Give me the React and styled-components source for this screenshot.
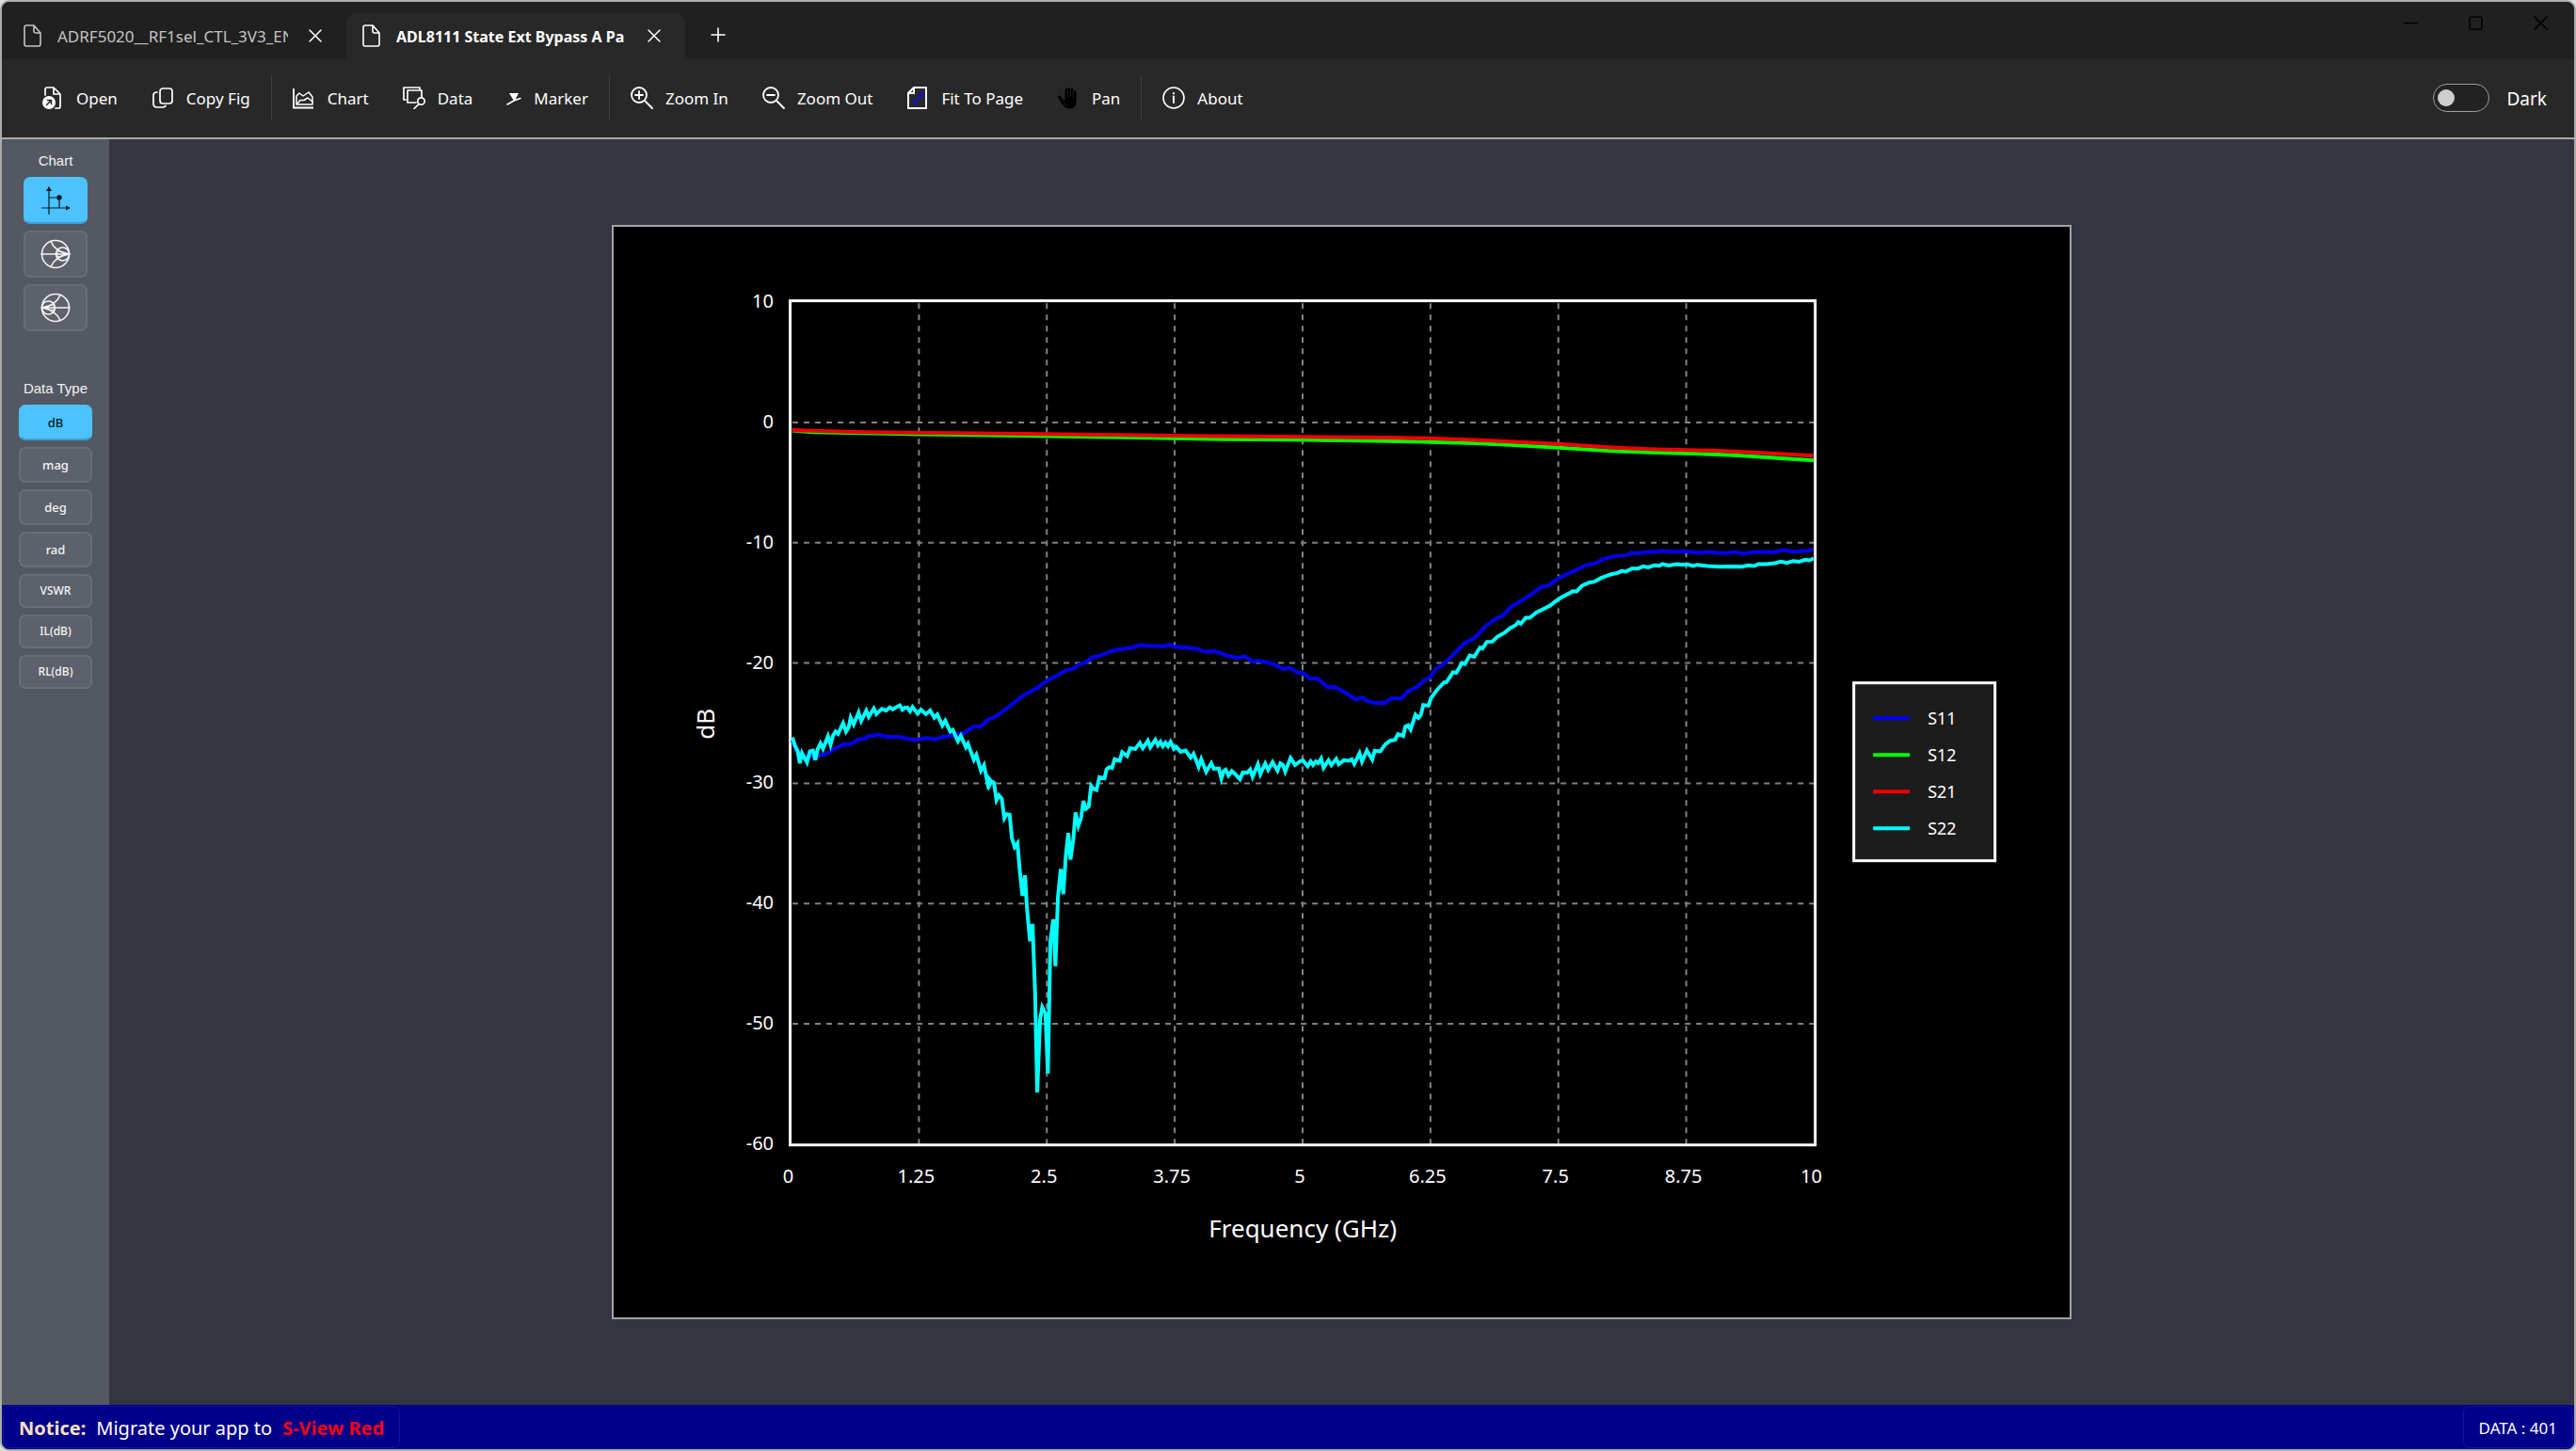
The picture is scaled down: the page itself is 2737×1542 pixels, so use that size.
import React, { useState } from "react";
import styled, { createGlobalStyle } from "styled-components";

const ui = `"Noto Sans", "Open Sans", sans-serif`;

const GlobalStyle = createGlobalStyle`
  *, *::before, *::after { box-sizing: border-box; }
  html, body { margin: 0; height: 100%; }
  body { background: #dcdcdc; font-family: ${ui}; color: #fff; }
  #root { height: 100%; }
  button { font: inherit; color: inherit; background: none; border: 0; padding: 0; cursor: pointer; }
`;

const Window = styled.div`
  height: 100vh;
  display: flex;
  flex-direction: column;
  overflow: hidden;
  border: 2px solid #ababab;
  border-radius: 10px;
  background: #343541;
`;

const TabStrip = styled.header`
  flex: none;
  display: flex;
  height: 60px;
  padding-left: 6px;
  background: #202020;
  border-bottom: 1px solid #1c1c1c;
`;

const Tab = styled.div`
  display: flex;
  align-items: center;
  align-self: flex-end;
  width: 360px;
  height: 48px;
  margin-bottom: -1px;
  padding: 0 26px 0 14px;
  border-radius: 10px 10px 0 0;
  background: ${(p) => (p.$active ? "#282828" : "transparent")};
  color: ${(p) => (p.$active ? "#fff" : "#c4c4c4")};
`;

const TabLabel = styled.button`
  flex: 1;
  min-width: 0;
  overflow: hidden;
  text-align: left;
  white-space: nowrap;
  && {
    margin: 0 22px 0 15px;
    padding-top: 2px;
    font-size: ${(p) => (p.$active ? 16 : 17)}px;
    line-height: 24px;
    font-weight: ${(p) => (p.$active ? 700 : 400)};
  }
`;

const GlyphButton = styled.button`
  display: flex;
  flex: none;
  align-items: center;
  justify-content: center;
  && { color: ${(p) => p.$tone || "#fff"}; }
`;

const NewTab = styled(GlyphButton)`
  margin-left: 27px;
  height: 48px;
  align-self: flex-end;
`;

const Caption = styled.div`
  display: flex;
  gap: 54px;
  height: 45px;
  margin-left: auto;
  padding-right: 28px;
`;

const Toolbar = styled.nav`
  flex: none;
  display: flex;
  align-items: center;
  height: 86px;
  padding: 0 29px 0 24px;
  background: #282828;
  border-bottom: 2px solid #a9a9ad;
`;

const Tool = styled.button`
  display: flex;
  align-items: center;
  gap: 13px;
  height: 48px;
  white-space: nowrap;
  && { padding: 0 18px; font-size: 17px; line-height: 24px; }
`;

const Caps = styled.span`
  padding-top: 2px;
`;

const Separator = styled.span`
  width: 1px;
  height: 48px;
  margin: 0 4px;
  background: #404040;
`;

const ThemeSwitch = styled.label`
  display: flex;
  align-items: center;
  gap: 18px;
  margin-left: auto;
  font-size: 19px;
  line-height: 24px;
`;

const SwitchInput = styled.input`
  appearance: none;
  display: flex;
  align-items: center;
  width: 60px;
  height: 30px;
  margin: 0;
  padding: 0 4px;
  border: 1px solid #a0a0a0;
  border-radius: 15px;
  background: #222;
  &::before {
    content: "";
    width: 18px;
    height: 18px;
    border-radius: 50%;
    background: #cecece;
  }
  &:checked { justify-content: flex-end; }
`;

const Body = styled.div`
  flex: 1;
  display: flex;
  min-height: 0;
`;

const Sidebar = styled.aside`
  flex: none;
  display: flex;
  flex-direction: column;
  gap: 50px;
  width: 114px;
  padding-top: 12px;
  background: #545862;
`;

const Group = styled.section`
  display: flex;
  flex-direction: column;
  align-items: center;
  gap: 7px;
`;

const GroupTitle = styled.h2`
  margin: 0 0 -1px;
  font: 400 15px/22px "Liberation Sans", Arial, sans-serif;
  color: #f2f2f2;
`;

const SideButton = styled.button`
  display: flex;
  align-items: center;
  justify-content: center;
  && {
    border: 2px solid ${(p) => (p.$on ? "#4cc2ff" : "#696d76")};
    border-bottom-color: ${(p) => (p.$on ? "#3f9fd2" : "#696d76")};
    border-radius: 7px;
    background: ${(p) => (p.$on ? "#4cc2ff" : "#5d616b")};
    color: ${(p) => (p.$on ? "#0b1c26" : "#f4f4f4")};
  }
`;

const ChartButton = styled(SideButton)`
  width: 68px;
  height: 50px;
`;

const TypeButton = styled(SideButton)`
  width: 78px;
  height: ${(p) => (p.$small ? 36 : 38)}px;
  && {
    font-size: ${(p) => (p.$small ? 12 : 13)}px;
    font-weight: 500;
    line-height: 16px;
  }
`;

const Canvas = styled.main`
  flex: 1;
  display: flex;
  align-items: center;
  justify-content: center;
  min-width: 0;
`;

const Figure = styled.figure`
  margin: 0;
  height: 86.5%;
  aspect-ratio: 4 / 3;
  border: 2px solid #a3a3a6;
  background: #000;
  svg { display: block; width: 100%; height: 100%; }
`;

const StatusBar = styled.footer`
  flex: none;
  display: flex;
  justify-content: space-between;
  height: 47px;
  padding: 1px;
  background: #00008b;
`;

const StatusCell = styled.div`
  display: flex;
  align-items: center;
  gap: 11px;
  padding: 2px 16px 0;
  border: 1px solid #14149a;
  border-radius: 7px;
  font-size: ${(p) => (p.$large ? 20 : 17)}px;
  line-height: 24px;
`;

const NoticeTitle = styled.strong`
  color: #ffe0c0;
`;

const NoticeLink = styled.a`
  color: #f80012;
  font-weight: 700;
  text-decoration: none;
`;

const Icon = ({ w = 24, h = 24, box, children, fill = "none", sw = 2 }) => (
  <svg width={w} height={h} viewBox={box || `0 0 ${w} ${h}`} fill={fill} stroke="currentColor" strokeWidth={sw} strokeLinejoin="round" strokeLinecap="round" aria-hidden="true">
    {children}
  </svg>
);

const PageIcon = () => (
  <Icon sw={1.6}>
    <path d="M6 1H14L21 9V21Q21 23 19 23H6Q4 23 4 21V3Q4 1 6 1Z M14 1V7Q14 9 16 9H21" />
  </Icon>
);
const CloseIcon = ({ w = 14 }) => (
  <Icon w={w} h={w} box="0 0 14 14" sw={1.5}><path d="M1 1L13 13M13 1L1 13" /></Icon>
);

const icons = {
  open: (
    <Icon sw={1.7}>
      <path d="M4 9V3Q4 1 6 1H13L20 8V21Q20 23 18 23H15 M13 1V8H20" />
      <circle cx="8" cy="17" r="7" fill="currentColor" stroke="none" />
      <path d="M5.5 19.5L10.5 14.5M6.5 14.5H10.5V18.5" stroke="#282828" strokeWidth="1.5" />
    </Icon>
  ),
  copy: (
    <Icon sw={1.7}>
      <rect x="9" y="2" width="13" height="16" rx="3" />
      <path d="M6 6Q2 6 2 9V18Q2 22 6 22H11Q14 22 15 20.5" />
    </Icon>
  ),
  chart: (
    <Icon sw={1.8}>
      <path d="M1 2V22.5H22" strokeLinecap="butt" strokeLinejoin="miter" />
      <path d="M4 19V10L7 7L11 10L17 6L21 11V19Z" strokeWidth="1.5" />
      <path d="M5 18L8 14.5H12L16 12L21 16" strokeWidth="1.5" />
    </Icon>
  ),
  data: (
    <Icon sw={1.7}>
      <path d="M3 14H1V1H18V3" />
      <path d="M14 17H5V4H20V11" />
      <circle cx="19.5" cy="15.5" r="3.7" />
      <path d="M17 18.5L12 23.5" />
    </Icon>
  ),
  marker: (
    <Icon w={16} h={24} sw={1.5}>
      <path d="M3 7H13L8.5 16Z" fill="currentColor" stroke="none" />
      <path d="M1 19L8 15L15 12.5" />
    </Icon>
  ),
  zoomIn: (
    <Icon sw={1.8}>
      <circle cx="9" cy="9" r="8" /><path d="M15 15L23 23M9 5V13M5 9H13" />
    </Icon>
  ),
  zoomOut: (
    <Icon sw={1.8}>
      <circle cx="9" cy="9" r="8" /><path d="M15 15L23 23M5 9H13" />
    </Icon>
  ),
  fit: (
    <Icon sw={2}>
      <path d="M8 1H21V23H2V7Z M8 1V7H2" strokeLinejoin="miter" />
      <path d="M8 18L17 7M8 14V18H11M13 7H17V11" stroke="#1c10b4" />
    </Icon>
  ),
  pan: (
    <Icon sw={1}>
      <path
        d="M6 14L3 10Q1 9 2 12L6 19Q9 23 13 23Q20 23 20 16V6Q20 4 18 5V11H17V3Q16 1 15 3V10H14V2Q13 0 12 2V10H11V3Q10 1 9 3V14Z"
        fill="#000" stroke="#000"
      />
      <path d="M11.3 4V11M14.3 3V11M17.3 5V11M6 15L10 20" stroke="#282828" strokeWidth="0.8" />
    </Icon>
  ),
  about: (
    <Icon sw={1.6}>
      <circle cx="12" cy="12" r="11" /><path d="M12 10.5V17M12 7V7.4" strokeWidth="2" />
    </Icon>
  ),
  cartesian: (
    <Icon w={32} h={32} sw={1.2}>
      <path d="M9 31V4M1 24H29M9 13H20V24" strokeLinecap="butt" />
      <path d="M9 1L12 6H6Z M32 24L27 21.5V26.5Z" fill="currentColor" stroke="none" />
      <circle cx="20" cy="13" r="2.7" fill="currentColor" stroke="none" />
    </Icon>
  ),
  smith: (
    <Icon w={32} h={32} sw={1.6}>
      <circle cx="16" cy="16" r="14.5" />
      <circle cx="23.5" cy="16" r="7" />
      <path d="M1 16H31M11 2.5Q15 13 30 16Q15 19 11 29.5" />
      <path d="M18 13V19L29 16Z" strokeWidth="1" />
    </Icon>
  ),
};
icons.smithFlipped = (
  <Icon w={32} h={32} sw={1.6}>
    <g transform="translate(32 0) scale(-1 1)">{icons.smith.props.children}</g>
  </Icon>
);

/* ---- sweep data: each band keeps its points in its own units ---- */
const LOW = { o: [640, 230], s: [2.24, 2.3758] };
const NULL_BAND = { o: [1000, 820], s: [3, 3] };
const HIGH = { o: [1300, 420], s: [2.3059, 3] };

const join = (...parts) =>
  parts
    .map(([{ o, s }, text]) =>
      text
        .trim()
        .split(/\s+/)
        .map((pair) => {
          const [x, y] = pair.split(",").map(Number);
          return `${(o[0] + x / s[0] - 650).toFixed(1)},${(o[1] + y / s[1] - 239).toFixed(1)}`;
        })
        .join(" ")
    )
    .join(" ");

const series = [
  {
    name: "S11",
    color: "#0000f0",
    points: join(
      [LOW, "452,1322 460,1345 475,1362 510,1362 535,1356 550,1344 575,1332 590,1332 610,1320 625,1318 635,1310 645,1312 655,1307 670,1312 690,1314 710,1314 730,1319 750,1321 770,1316 790,1320 810,1314 830,1311 860,1304 883,1288 900,1288 918,1270 935,1263 965,1240 1000,1210 1035,1190 1060,1170 1080,1160 1105,1145 1120,1142 1135,1130 1150,1126 1165,1113 1185,1108 1215,1096 1235,1092 1260,1088 1280,1082 1300,1084 1320,1084 1335,1085 1350,1081 1365,1086 1390,1088 1415,1091 1435,1099 1455,1097 1470,1102"],
      [HIGH, "0,826 35,838 52,832 70,848 85,846 120,855 145,872 162,868 180,883 195,886 212,903 230,903 255,930 272,929 295,945 325,970 340,963 350,974 370,980 396,980 410,966 436,966 450,945 475,928 492,908 505,900 520,872 540,855 560,830 590,790 615,773 645,732 670,710 683,703 705,673 735,650 780,610 798,605 820,583 850,565 890,540 908,537 930,522 960,512 988,509 1000,502 1020,503 1040,498 1060,499 1075,496 1100,499 1130,497 1165,502 1190,499 1220,503 1240,501 1255,499 1272,505 1295,500 1330,498 1345,501 1370,493 1395,498 1430,495 1445,491"]
    ),
  },
  {
    name: "S12",
    color: "#00ff00",
    points: join(
      [LOW, "452,540 500,544 753,549.5 1058,554.5 1362,560"],
      [HIGH, "0,140 200,142 400,146 507,149 600,152 700,158 820,167 950,177 1040,182 1133,185 1250,191 1445,207"]
    ),
  },
  {
    name: "S21",
    color: "#ee0000",
    points: join(
      [LOW, "452,539 500,541 600,543.5 753,546 1058,549 1362,553"],
      [HIGH, "0,130 200,132 400,134.5 507,137 600,141 700,147 820,155 950,166 1040,171 1133,174 1200,176 1320,183 1445,192"]
    ),
  },
  {
    name: "S22",
    color: "#00ffff",
    points: join(
      [LOW, "452,1315 458,1335 465,1350 470,1380 475,1355 487,1378 494,1350 501,1348 507,1372 512,1345 519,1330 525,1343 537,1312 543,1333 549,1310 555,1300 561,1306 573,1279 580,1300 586,1290 591,1265 598,1282 610,1252 616,1273 628,1247 634,1263 646,1242 652,1256 665,1243 675,1247 684,1239 691,1244 702,1237 708,1234 714,1245 720,1240 726,1240 732,1249 738,1238 750,1255 758,1245 770,1256 780,1247 790,1265 797,1257 809,1285 816,1273 828,1300 834,1296 846,1324 853,1311 865,1340 870,1331 884,1371 890,1359 901,1399 908,1385 918,1436 925,1425"],
      [NULL_BAND, "143,10 152,45 160,30 168,35 176,90 184,75 193,85 201,148 209,135 218,137 225,210 234,240 243,228 250,310 259,395 267,330 273,430 283,540 291,485 299,700 306,1022 315,790 322,750 332,770 340,962 348,540 357,470 364,620 372,400 381,310 389,390 397,270 405,195 412,280 421,215 428,130 437,172 446,145 453,93 461,118 470,110 478,45 486,55 495,58"],
      [LOW, "1183,1415 1195,1418 1200,1395 1206,1390 1213,1392 1219,1370 1231,1374 1237,1352 1249,1362 1256,1342 1268,1344 1279,1329 1286,1342 1298,1323 1304,1340 1316,1321 1322,1335 1328,1326 1334,1337 1340,1328 1346,1337 1352,1326 1360,1344 1366,1339 1376,1351 1388,1348 1400,1366 1407,1356 1419,1389 1425,1370 1437,1402 1449,1380 1455,1394 1467,1393 1473,1419"],
      [HIGH, "0,1198 5,1193 12,1212 20,1198 28,1207 40,1224 47,1202 58,1203 65,1193 71,1216 84,1176 90,1207 102,1174 109,1194 120,1169 132,1196 139,1173 145,1178 151,1199 164,1156 175,1178 187,1167 194,1163 206,1182 213,1167 219,1178 226,1167 232,1172 239,1158 245,1187 257,1163 264,1178 276,1159 282,1176 295,1163 307,1165 314,1160 320,1175 333,1141 339,1167 351,1132 364,1161 370,1133 384,1135 396,1113 408,1101 420,1098 427,1080 440,1086 445,1056 452,1052 458,1065 470,1018 477,1028 483,1019 489,987 502,989 508,965 521,942 540,915 546,914 562,883 570,884 584,853 591,856 603,829 614,833 628,804 634,807 645,786 658,785 670,770 690,755 702,742 715,733 722,723 728,728 740,709 750,709 765,693 785,680 800,670 815,655 830,642 845,632 855,624 865,625 878,607 895,597 908,594 925,582 950,570 965,566 975,560 985,562 1000,552 1015,552 1028,545 1040,548 1055,542 1068,543 1075,538 1090,542 1110,538 1125,540 1135,538 1150,544 1160,540 1185,544 1215,546 1240,545 1270,546 1285,542 1300,544 1310,538 1330,538 1350,535 1365,530 1380,534 1395,528 1410,530 1425,524 1435,526 1445,520"]
    ),
  },
];

const PLOT = { left: 190, right: 1278, top: 81, bottom: 977 };
const xTicks = ["0", "1.25", "2.5", "3.75", "5", "6.25", "7.5", "8.75", "10"];
const yTicks = ["10", "0", "-10", "-20", "-30", "-40", "-50", "-60"];
const tickX = (i) => 190.5 + i * 135.85;
const tickY = (i) => 82 + i * 127.8;

function Plot() {
  return (
    <svg viewBox="2 2 1547 1159" role="img" aria-label="S-parameters in dB against frequency" fontFamily={ui} fill="#fff">
      <g stroke="#828282" strokeWidth="2" strokeDasharray="6 6">
        {xTicks.slice(1, -1).map((t, i) => (
          <line key={t} x1={tickX(i + 1)} x2={tickX(i + 1)} y1={PLOT.top + 2} y2={PLOT.bottom} />
        ))}
        {yTicks.slice(1, -1).map((t, i) => (
          <line key={t} x1={PLOT.left + 2} x2={PLOT.right} y1={tickY(i + 1)} y2={tickY(i + 1)} />
        ))}
      </g>
      <rect x="189.5" y="80.5" width="1089" height="897" fill="none" stroke="#fff" strokeWidth="3" />
      <g fill="none" strokeWidth="4">
        {series.map((s) => (
          <polyline key={s.name} points={s.points} stroke={s.color} />
        ))}
      </g>
      <g fontSize="20">
        {yTicks.map((t, i) => (
          <text key={t} x="172" y={tickY(i) + 6} textAnchor="end">{t}</text>
        ))}
        {xTicks.map((t, i) => (
          <text key={t} x={tickX(i) - 3} y="1018" textAnchor="middle">{t}</text>
        ))}
      </g>
      <g fontSize="26" textAnchor="middle">
        <text x="734" y="1076">Frequency (GHz)</text>
        <text transform="translate(109 530) rotate(-90)">dB</text>
      </g>
      <rect x="1319.5" y="486.5" width="150" height="189" fill="#1c1c1c" stroke="#fff" strokeWidth="3" />
      {series.map((s, i) => (
        <g key={s.name} fontSize="18">
          <line x1="1340" x2="1379" y1={524 + i * 39} y2={524 + i * 39} stroke={s.color} strokeWidth="4" />
          <text x="1398" y={531 + i * 39}>{s.name}</text>
        </g>
      ))}
    </svg>
  );
}

const toolGroups = [
  [["open", "Open"], ["copy", "Copy Fig"]],
  [["chart", "Chart"], ["data", "Data"], ["marker", "Marker"]],
  [["zoomIn", "Zoom In"], ["zoomOut", "Zoom Out"], ["fit", "Fit To Page"], ["pan", "Pan"]],
  [["about", "About"]],
];
const files = ["ADRF5020__RF1sel_CTL_3V3_EN", "ADL8111 State Ext Bypass A Pa"];
const chartKinds = [["cartesian", "Cartesian"], ["smith", "Smith"], ["smithFlipped", "Admittance"]];
const dataTypes = ["dB", "mag", "deg", "rad", "VSWR", "IL(dB)", "RL(dB)"];

export default function App() {
  const [tab, setTab] = useState(1);
  const [kind, setKind] = useState("cartesian");
  const [type, setType] = useState("dB");

  return (
    <>
      <GlobalStyle />
      <Window>
        <TabStrip>
          {files.map((name, i) => (
            <Tab key={name} $active={tab === i}>
              <PageIcon />
              <TabLabel $active={tab === i} onClick={() => setTab(i)}>{name}</TabLabel>
              <GlyphButton aria-label="Close tab"><CloseIcon /></GlyphButton>
            </Tab>
          ))}
          <NewTab aria-label="New tab">
            <Icon w={16} h={16} sw={1.6}><path d="M8 1V15M1 8H15" /></Icon>
          </NewTab>
          <Caption>
            <GlyphButton $tone="#000" aria-label="Minimize">
              <Icon w={15} h={15} sw={1.5}><path d="M0.5 7.5H14.5" /></Icon>
            </GlyphButton>
            <GlyphButton $tone="#000" aria-label="Maximize">
              <Icon w={15} h={15} sw={1.5}><rect x="1" y="1" width="13" height="13" rx="2" /></Icon>
            </GlyphButton>
            <GlyphButton $tone="#000" aria-label="Close"><CloseIcon w={15} /></GlyphButton>
          </Caption>
        </TabStrip>
        <Toolbar>
          {toolGroups.map((group, g) => (
            <React.Fragment key={g}>
              {g > 0 && <Separator />}
              {group.map(([icon, label]) => (
                <Tool key={icon}>{icons[icon]}<Caps>{label}</Caps></Tool>
              ))}
            </React.Fragment>
          ))}
          <ThemeSwitch>
            <SwitchInput type="checkbox" role="switch" />
            <Caps>Dark</Caps>
          </ThemeSwitch>
        </Toolbar>
        <Body>
          <Sidebar>
            <Group>
              <GroupTitle>Chart</GroupTitle>
              {chartKinds.map(([id, label]) => (
                <ChartButton key={id} $on={kind === id} aria-label={label} onClick={() => setKind(id)}>{icons[id]}</ChartButton>
              ))}
            </Group>
            <Group>
              <GroupTitle>Data Type</GroupTitle>
              {dataTypes.map((t, i) => (
                <TypeButton key={t} $small={i > 3} $on={type === t} onClick={() => setType(t)}>{t}</TypeButton>
              ))}
            </Group>
          </Sidebar>
          <Canvas>
            <Figure><Plot /></Figure>
          </Canvas>
        </Body>
        <StatusBar>
          <StatusCell $large>
            <NoticeTitle>Notice:</NoticeTitle>
            <span>Migrate your app to</span>
            <NoticeLink href="#s-view-red">S-View Red</NoticeLink>
          </StatusCell>
          <StatusCell>DATA : 401</StatusCell>
        </StatusBar>
      </Window>
    </>
  );
}
